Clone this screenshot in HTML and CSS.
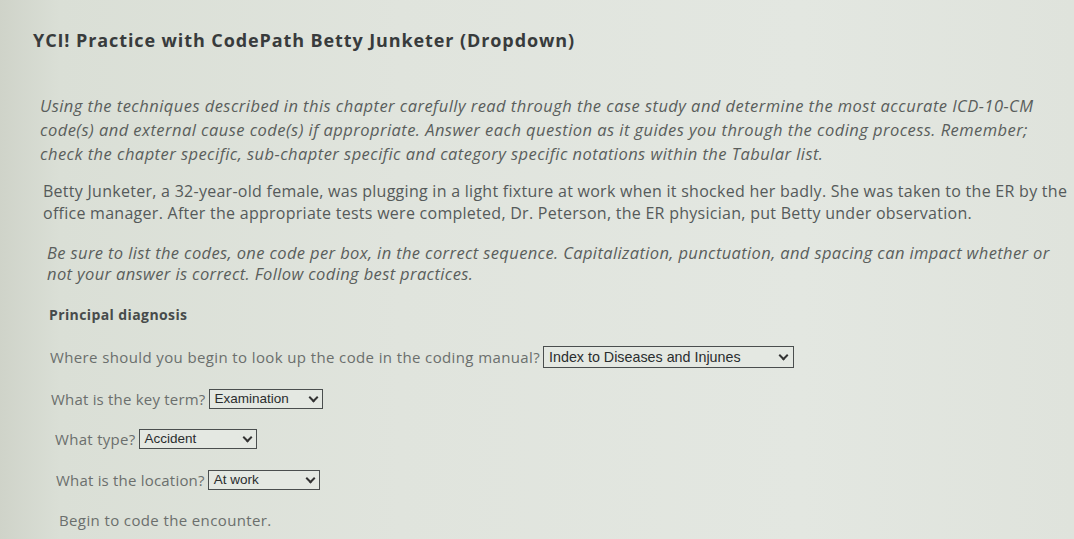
FILE: index.html
```html
<!DOCTYPE html>
<html>
<head>
<meta charset="utf-8">
<link rel="stylesheet" href="styles.css">
</head>
<body>
<div class="page">
  <h1 class="title">YCI! Practice with CodePath Betty Junketer (Dropdown)</h1>
  <p class="intro italic">Using the techniques described in this chapter carefully read through the case study and determine the most accurate ICD-10-CM<br>code(s) and external cause code(s) if appropriate. Answer each question as it guides you through the coding process. Remember;<br>check the chapter specific, sub-chapter specific and category specific notations within the Tabular list.</p>
  <p class="case">Betty Junketer, a 32-year-old female, was plugging in a light fixture at work when it shocked her badly. She was taken to the ER by the<br>office manager. After the appropriate tests were completed, Dr. Peterson, the ER physician, put Betty under observation.</p>
  <p class="note italic">Be sure to list the codes, one code per box, in the correct sequence. Capitalization, punctuation, and spacing can impact whether or<br>not your answer is correct. Follow coding best practices.</p>
  <h2 class="section">Principal diagnosis</h2>
  <div class="q q1">Where should you begin to look up the code in the coding manual?
    <span class="sel sel-lg"><span class="val">Index to Diseases and Injunes</span><span class="chev"></span></span>
  </div>
  <div class="q q2">What is the key term?
    <span class="sel sel-sm w-key"><span class="val">Examination</span><span class="chev"></span></span>
  </div>
  <div class="q q3">What type?
    <span class="sel sel-sm w-type"><span class="val">Accident</span><span class="chev"></span></span>
  </div>
  <div class="q q4">What is the location?
    <span class="sel sel-sm w-loc"><span class="val">At work</span><span class="chev"></span></span>
  </div>
  <div class="q q5">Begin to code the encounter.</div>
</div>
</body>
</html>
```

FILE: styles.css
```css
html, body {
  margin: 0;
  padding: 0;
}
body {
  width: 1074px;
  height: 539px;
  overflow: hidden;
  background: linear-gradient(90deg, #cfd3c9 0px, #dadfd6 60px, #e0e4dd 400px, #e3e7e1 800px, #dfe3dc 1074px);
  font-family: "Open Sans", Lato, sans-serif;
  color: #5a5e5c;
}
.page {
  padding: 29px 0 0 33px;
}
.title {
  margin: 0;
  font-size: 18px;
  letter-spacing: 0.9px;
  font-weight: 700;
  color: #383b3c;
  line-height: 22px;
}
.italic { font-style: italic; }
.intro {
  margin: 43px 0 0 7px;
  font-size: 16.5px;
  letter-spacing: 0.45px;
  line-height: 24px;
  white-space: nowrap;
}
.case {
  margin: 14px 0 0 10px;
  font-size: 16px;
  letter-spacing: 0.27px;
  line-height: 22px;
  white-space: nowrap;
  color: #555a5a;
}
.note {
  margin: 18px 0 0 14px;
  font-size: 16.5px;
  letter-spacing: 0.37px;
  line-height: 21px;
  white-space: nowrap;
}
.section {
  margin: 22px 0 0 16px;
  font-size: 14px;
  letter-spacing: 0.4px;
  font-weight: 700;
  color: #474b4b;
  line-height: 18px;
}
.q {
  font-size: 15px;
  letter-spacing: 0.38px;
  line-height: 22px;
  color: #6b6f6d;
  display: flex;
  align-items: center;
  gap: 3px;
}
.q1 { margin: 22px 0 0 17px; }
.q2 { margin: 20px 0 0 18px; }
.q3 { margin: 18px 0 0 22px; }
.q4 { margin: 19px 0 0 23px; }
.q5 { margin: 18px 0 0 26px; }
.q2, .q3, .q4 { letter-spacing: 0.2px; }
.q3 { letter-spacing: 0.3px; }
.sel {
  display: inline-flex;
  align-items: center;
  justify-content: space-between;
  border: 1px solid #4a4e4e;
  background: #e4e8e2;
  font-family: "Liberation Sans", Arial, sans-serif;
  letter-spacing: 0;
  color: #2a2d2e;
  box-sizing: border-box;
}
.sel-lg {
  width: 251px;
  height: 22px;
  font-size: 14.3px;
  padding: 0 6px 0 5px;
}
.sel-sm {
  height: 20px;
  font-size: 13.5px;
  padding: 0 5px 0 5px;
}
.w-key { width: 114px; }
.w-type { width: 118px; }
.w-loc { width: 112px; }
.chev {
  width: 5px;
  height: 5px;
  border-right: 2px solid #333;
  border-bottom: 2px solid #333;
  transform: rotate(45deg);
  margin-top: -4px;
}
```
